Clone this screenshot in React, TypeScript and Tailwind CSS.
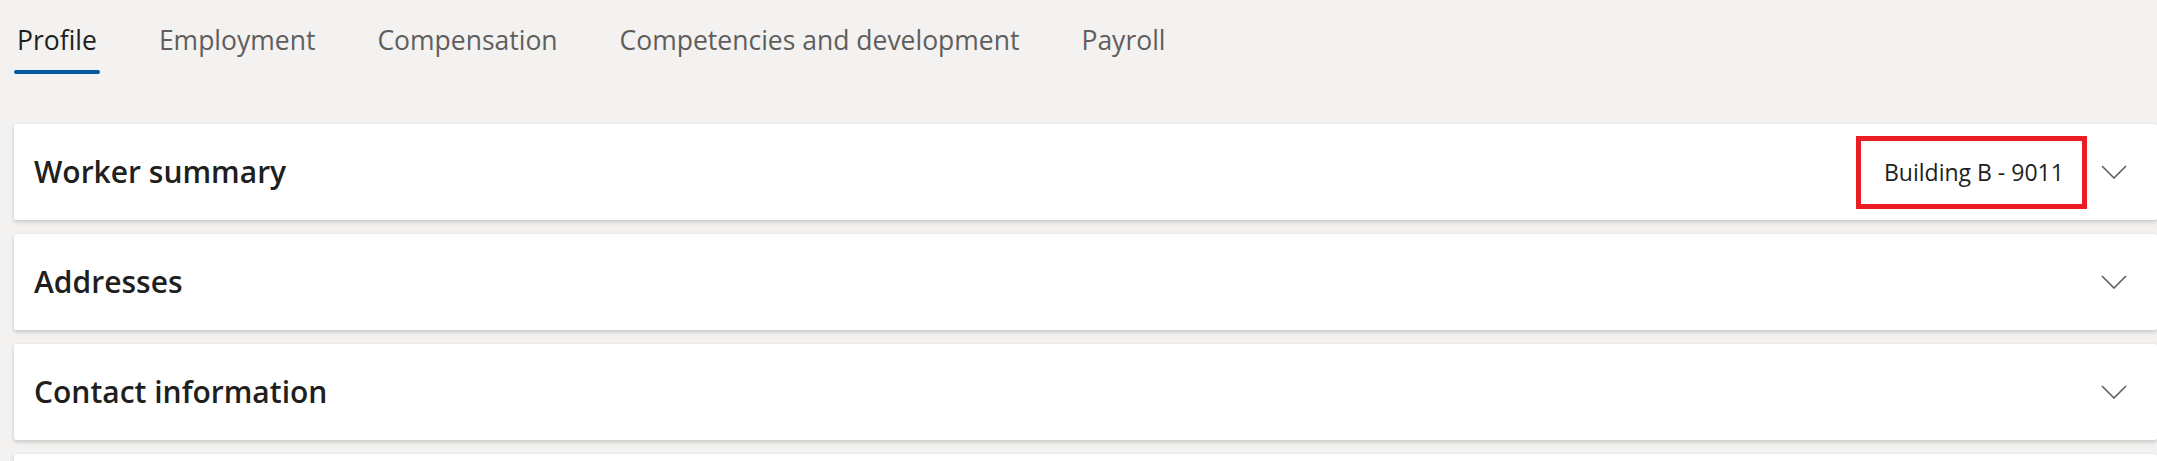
import React from "react";

const tabs = ["Profile", "Employment", "Compensation", "Competencies and development", "Payroll"];

function Chevron() {
  return (
    <svg width="26" height="14" viewBox="0 0 26 14" className="shrink-0">
      <polyline points="1,1 13,13 25,1" fill="none" stroke="#605e5c" strokeWidth="1.6" />
    </svg>
  );
}

interface CardProps {
  title?: string;
  summary?: string;
}

function SectionCard({ title, summary }: CardProps) {
  return (
    <div className="h-[96px] shrink-0 bg-white rounded-[2px] shadow-[0_2px_4px_rgba(0,0,0,0.18),0_0_1px_rgba(0,0,0,0.1)] flex items-center pl-[20px] pr-[30px]">
      <h2 className="flex-1 text-[30px] font-semibold text-[#201f1e] leading-none">{title}</h2>
      {summary && (
        <div className="w-[231px] h-[73px] border-[5px] border-[#ec1c24] flex items-center pl-[23px] mr-[14px] text-[23px] text-[#201f1e]">
          {summary}
        </div>
      )}
      <Chevron />
    </div>
  );
}

export default function App() {
  const active = "Profile";
  return (
    <div className="min-h-screen h-[461px] overflow-hidden bg-[#f3f2f1] font-['Segoe_UI','Open_Sans',sans-serif]">
      {/* Tabs */}
      <div className="flex gap-[56px] pl-[14px] pt-[22px] h-[124px]">
        {tabs.map((t) => (
          <div key={t} className="flex flex-col items-stretch">
            <span
              className={`px-[3px] text-[26.5px] leading-[36px] ${
                t === active ? "text-[#201f1e]" : "text-[#605e5c]"
              }`}
            >
              {t}
            </span>
            {t === active && <div className="mt-[12px] h-[4px] rounded-[2px] bg-[#005a9e]" />}
          </div>
        ))}
      </div>

      {/* Sections */}
      <div className="flex flex-col gap-[14px] pl-[14px]">
        <SectionCard title="Worker summary" summary="Building B - 9011" />
        <SectionCard title="Addresses" />
        <SectionCard title="Contact information" />
        {/* next section, only its top edge is in view */}
        <SectionCard />
      </div>
    </div>
  );
}
